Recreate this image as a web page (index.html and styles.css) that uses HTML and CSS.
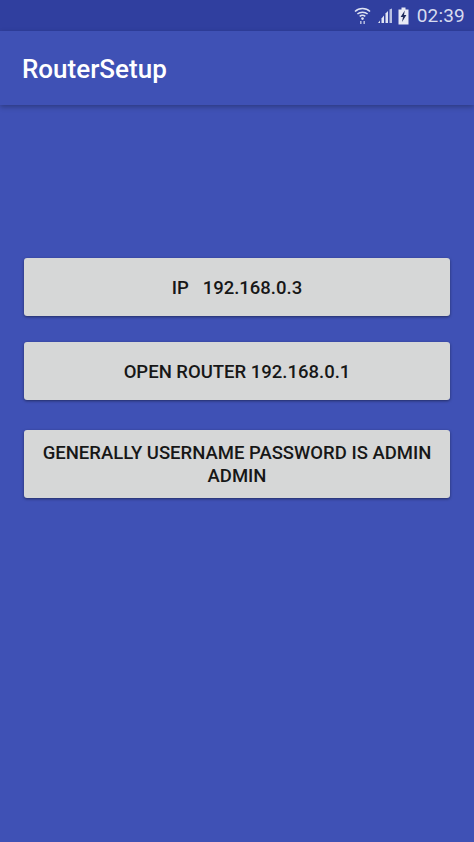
FILE: index.html
```html
<!DOCTYPE html>
<html lang="en">
<head>
<meta charset="utf-8">
<title>RouterSetup</title>
<link rel="stylesheet" href="styles.css">
</head>
<body>
<div class="status-bar">
  <svg class="ic-wifi" width="17" height="20" viewBox="0 0 17 20">
    <g fill="none" stroke="#dfe3f3" stroke-width="1.5">
      <path d="M1 6.500 C5 2.600 12 2.600 16 6.500"/>
      <path d="M3.400 9 C6 6.600 11 6.600 13.600 9"/>
      <path d="M5.700 11.400 C7.300 10 9.700 10 11.300 11.400"/>
    </g>
    <circle cx="8.500" cy="13.600" r="1.300" fill="#dfe3f3"/>
    <path d="M6 16h1.600v3h-1.600zM9.400 16h1.600v3h-1.600z" fill="#aeb5dc"/>
  </svg>
  <svg class="ic-signal" width="16" height="16" viewBox="0 0 16 16">
    <path d="M1 15 L3 12.500 V15 Z" fill="#dfe3f3"/>
    <path d="M4.500 15 V10.500 L7 7.500 V15 Z" fill="#dfe3f3"/>
    <path d="M8.500 15 V5.500 L11 3 V15 Z" fill="#dfe3f3"/>
    <path d="M12.500 15 V1.500 L15 0.500 V15 Z" fill="#b9c0e2"/>
  </svg>
  <svg class="ic-battery" width="11" height="18" viewBox="0 0 11 18">
    <path d="M3.500 0.500h4v2h3v15h-10v-15h3z" fill="#e8eaf6"/>
    <path d="M6.800 3.500 L2.600 10 H5 L4 15 L8.400 8 H6 Z" fill="#1e2a5c"/>
  </svg>
  <span class="clock">02:39</span>
</div>
<header class="toolbar"><h1 class="title">RouterSetup</h1></header>
<main class="content">
  <button class="btn btn-one" type="button">IP &nbsp; 192.168.0.3</button>
  <button class="btn btn-one" type="button">OPEN ROUTER 192.168.0.1</button>
  <button class="btn btn-two" type="button">GENERALLY USERNAME PASSWORD IS ADMIN ADMIN</button>
</main>
</body>
</html>
```
FILE: styles.css
```css
* { box-sizing: border-box; }
html, body { margin: 0; padding: 0; }
body {
  width: 474px;
  height: 842px;
  overflow: hidden;
  background: #3f51b5;
  font-family: Roboto, "Liberation Sans", sans-serif;
}
.status-bar {
  height: 31px;
  background: #303f9f;
  display: flex;
  align-items: center;
  justify-content: flex-end;
  padding-right: 9px;
  color: #d7dbf0;
}
.ic-wifi { margin-right: 6px; margin-top: -1px; }
.ic-signal { margin-right: 5px; margin-top: 1px; }
.ic-battery { margin-right: 8px; }
.clock { font-size: 19px; line-height: 31px; letter-spacing: 0.2px; }
.toolbar {
  height: 74px;
  background: #3f51b5;
  display: flex;
  align-items: center;
  padding: 2px 22px 0;
  box-shadow: 0 2px 5px rgba(0, 0, 0, 0.28);
  position: relative;
}
.title {
  margin: 0;
  font-size: 26px;
  font-weight: 500;
  color: #fff;
}
.content {
  padding: 153px 24px 0;
  display: flex;
  flex-direction: column;
}
.btn {
  display: block;
  width: 100%;
  border: 0;
  border-radius: 3px;
  background: #d6d7d7;
  color: #171717;
  font-family: inherit;
  font-size: 18.500px;
  font-weight: 500;
  line-height: 23px;
  padding: 2px 16px 0;
  text-align: center;
  box-shadow: 0 1px 3px rgba(0, 0, 0, 0.45);
}
.btn-one { height: 58px; margin-bottom: 26px; }
.btn-two { height: 68px; margin-top: 4px; }
```
